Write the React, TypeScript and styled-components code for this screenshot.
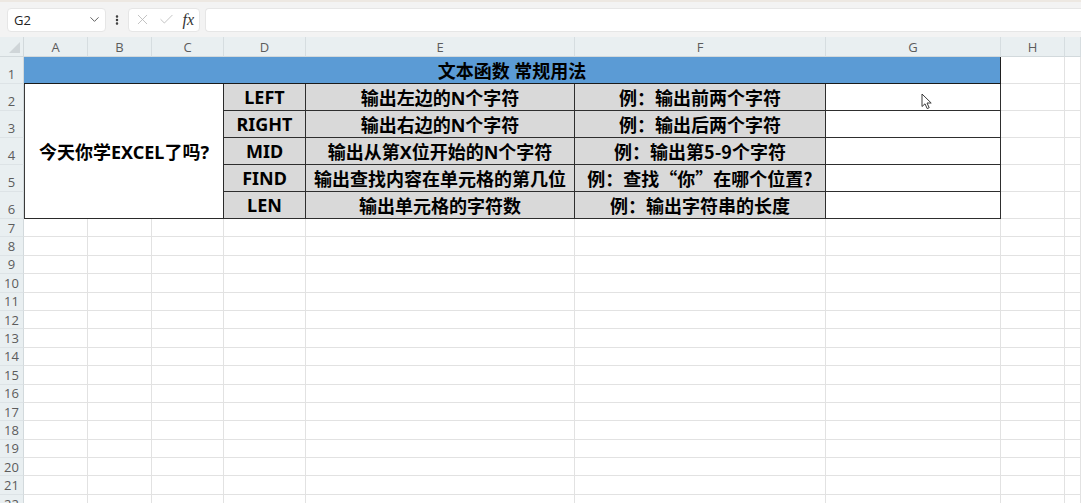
import React from 'react';
import styled, { createGlobalStyle } from 'styled-components';
import { ChevronDown, EllipsisVertical, X, Check } from 'lucide-react';

const GlobalStyle = createGlobalStyle`
  html, body {
    margin: 0;
    padding: 0;
    background: #ffffff;
    overflow: hidden;
  }
  * {
    box-sizing: border-box;
  }
`;

const Page = styled.div`
  position: relative;
  width: 1081px;
  height: 503px;
  overflow: hidden;
  display: flex;
  flex-direction: column;
  font-family: "Noto Sans", "Noto Sans CJK SC", sans-serif;
`;

const Toolbar = styled.div`
  height: 37px;
  flex: 0 0 37px;
  display: flex;
  align-items: center;
  gap: 5px;
  padding: 0 0 0 7px;
  background: #f3f3f3;
  border-top: 2px solid #ede8e2;
`;

const NameBox = styled.div`
  width: 99px;
  height: 24px;
  display: flex;
  align-items: center;
  justify-content: space-between;
  padding: 0 3px 0 6px;
  background: #ffffff;
  border: 1px solid #e6e6e6;
  border-radius: 4px;
  font-family: "Open Sans", "Liberation Sans", sans-serif;
  font-size: 13px;
  color: #222222;
  svg {
    color: #555555;
  }
`;

const Dots = styled.div`
  width: 12px;
  display: flex;
  justify-content: center;
  color: #333333;
`;

const FxBox = styled.div`
  width: 72px;
  height: 24px;
  display: flex;
  align-items: center;
  justify-content: space-between;
  padding: 0 5px 0 5px;
  background: #ffffff;
  border: 1px solid #e6e6e6;
  border-radius: 4px;
  color: #b8b8b8;
`;

const FxLabel = styled.span`
  font-family: "Liberation Serif", "DejaVu Serif", serif;
  font-style: italic;
  font-size: 16px;
  color: #333333;
  line-height: 1;
`;

const FormulaInput = styled.div`
  flex: 1;
  height: 24px;
  background: #ffffff;
  border: 1px solid #e6e6e6;
  border-right: none;
  border-radius: 4px 0 0 4px;
`;

const Sheet = styled.div`
  flex: 1;
  display: grid;
  grid-template-columns: 24px 64px 64px 72px 82px 269px 251px 175px 64px 1fr;
  grid-template-rows: 20px repeat(6, 27px) repeat(16, 18.4px);
  overflow: hidden;
  background: #ffffff;
`;

const Corner = styled.div`
  position: relative;
  background: #e9eff1;
  border-right: 1px solid #d2d9dc;
  border-bottom: 1px solid #d2d9dc;
  &::after {
    content: '';
    position: absolute;
    right: 3px;
    bottom: 3px;
    border-style: solid;
    border-width: 0 0 11px 11px;
    border-color: transparent transparent #cfd5d8 transparent;
  }
`;

const ColHeader = styled.div`
  display: flex;
  align-items: center;
  justify-content: center;
  background: #e9eff1;
  border-right: 1px solid #d6dde0;
  border-bottom: 1px solid #d2d9dc;
  font-family: "Open Sans", "Liberation Sans", sans-serif;
  font-size: 13px;
  color: #5c5c5c;
`;

const RowHeader = styled.div<{ $tall?: boolean }>`
  display: flex;
  align-items: ${(p) => (p.$tall ? 'flex-end' : 'center')};
  justify-content: center;
  padding-bottom: ${(p) => (p.$tall ? '1px' : '0')};
  background: #e9eff1;
  border-right: 1px solid #d2d9dc;
  border-bottom: 1px solid #dde3e6;
  font-family: "Open Sans", "Liberation Sans", sans-serif;
  font-size: 13px;
  line-height: 16px;
  color: #5c5c5c;
`;

const Cell = styled.div`
  border-right: 1px solid #e2e2e2;
  border-bottom: 1px solid #e2e2e2;
`;

const TitleCell = styled.div`
  grid-column: span 7;
  display: flex;
  align-items: center;
  justify-content: center;
  background: #5b9bd5;
  border-right: 1px solid #1f1f1f;
  border-bottom: 1px solid #1a1a1a;
  font-size: 18px;
  font-weight: 700;
  color: #000000;
`;

const MergedCell = styled.div`
  grid-column: span 3;
  grid-row: span 5;
  display: flex;
  align-items: center;
  justify-content: center;
  background: #ffffff;
  border-left: 1px solid #3a3a3a;
  border-right: 1px solid #2a2a2a;
  border-bottom: 1px solid #2a2a2a;
  font-size: 18px;
  font-weight: 700;
  color: #000000;
`;

const TableCell = styled.div<{ $gray?: boolean; $cjk?: boolean }>`
  display: flex;
  align-items: center;
  justify-content: center;
  background: ${(p) => (p.$gray ? '#d9d9d9' : '#ffffff')};
  border-right: 1px solid #2e2e2e;
  border-bottom: 1px solid #2e2e2e;
  font-family: ${(p) =>
    p.$cjk ? '"Noto Sans CJK SC", sans-serif' : '"Noto Sans", "Noto Sans CJK SC", sans-serif'};
  font-size: 18px;
  font-weight: 700;
  color: #000000;
  white-space: nowrap;
  overflow: hidden;
`;

const Pointer = styled.svg`
  position: absolute;
  left: 921px;
  top: 93px;
`;

const columns = ['A', 'B', 'C', 'D', 'E', 'F', 'G', 'H', ''];

const rows = [
  ['LEFT', '输出左边的N个字符', '例：输出前两个字符'],
  ['RIGHT', '输出右边的N个字符', '例：输出后两个字符'],
  ['MID', '输出从第X位开始的N个字符', '例：输出第5-9个字符'],
  ['FIND', '输出查找内容在单元格的第几位', '例：查找“你”在哪个位置?'],
  ['LEN', '输出单元格的字符数', '例：输出字符串的长度'],
];

const emptyRows = Array.from({ length: 16 }, (_, i) => i + 7);

export default function App() {
  return (
    <Page>
      <GlobalStyle />
      <Toolbar>
        <NameBox>
          G2
          <ChevronDown size={15} strokeWidth={1.5} />
        </NameBox>
        <Dots>
          <EllipsisVertical size={14} strokeWidth={3} />
        </Dots>
        <FxBox>
          <X size={17} strokeWidth={1.2} />
          <Check size={17} strokeWidth={1.2} />
          <FxLabel>fx</FxLabel>
        </FxBox>
        <FormulaInput />
      </Toolbar>

      <Sheet>
        <Corner />
        {columns.map((c, i) => (
          <ColHeader key={i}>{c}</ColHeader>
        ))}

        <RowHeader $tall>1</RowHeader>
        <TitleCell>文本函数 常规用法</TitleCell>
        <Cell />
        <Cell />

        {rows.map((r, i) => (
          <React.Fragment key={r[0]}>
            <RowHeader $tall>{i + 2}</RowHeader>
            {i === 0 && <MergedCell>今天你学EXCEL了吗?</MergedCell>}
            <TableCell $gray>{r[0]}</TableCell>
            <TableCell $gray>{r[1]}</TableCell>
            <TableCell $gray $cjk>{r[2]}</TableCell>
            <TableCell />
            <Cell />
            <Cell />
          </React.Fragment>
        ))}

        {emptyRows.map((n) => (
          <React.Fragment key={n}>
            <RowHeader>{n}</RowHeader>
            {columns.map((c, i) => (
              <Cell key={i} />
            ))}
          </React.Fragment>
        ))}
      </Sheet>

      <Pointer width="12" height="17" viewBox="0 0 12 17">
        <path
          d="M1 1 L1 13.5 L4 10.8 L6.2 15.6 L8.2 14.7 L6 10 L10.2 10 Z"
          fill="#ffffff"
          stroke="#3a3a3a"
          strokeWidth="1"
          strokeLinejoin="round"
        />
      </Pointer>
    </Page>
  );
}
